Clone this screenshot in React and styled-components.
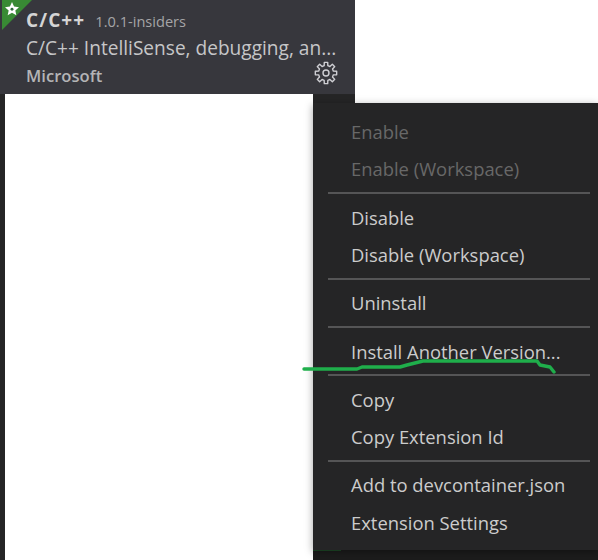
import React from "react"
import styled, { createGlobalStyle } from "styled-components"

const GlobalStyle = createGlobalStyle`
  html, body {
    margin: 0;
    padding: 0;
    background: #fff;
  }
`
const Page = styled.div`
  position: relative;
  width: 598px;
  height: 560px;
  overflow: hidden;
  background: #fff;
  font-family: "Open Sans", "Noto Sans", sans-serif;
  display: flex;
  flex-direction: column;
`
const ExtensionRow = styled.div`
  position: relative;
  box-sizing: border-box;
  width: 355px;
  height: 94px;
  padding: 7px 0 0 26px;
  background: #37373d;
  flex: 0 0 auto;
`
const Badge = styled.div`
  position: absolute;
  top: 0;
  left: 2px;
  width: 0;
  height: 0;
  border-top: 30px solid #388a34;
  border-right: 30px solid transparent;
`
const BadgeStar = styled.svg`
  position: absolute;
  top: 1px;
  left: 4px;
  width: 16px;
  height: 16px;
`
const TitleLine = styled.div`
  display: flex;
  align-items: baseline;
  height: 26px;
  line-height: 26px;
`
const Name = styled.span`
  font-size: 19px;
  font-weight: 700;
  letter-spacing: 1.1px;
  color: #d4d4d4;
  margin-right: 10px;
`
const Version = styled.span`
  font-size: 14.6px;
  color: #a5a5a7;
`
const Description = styled.div`
  font-size: 19.1px;
  line-height: 30px;
  color: #c6c6c8;
  white-space: nowrap;
`
const FooterLine = styled.div`
  display: flex;
  align-items: center;
  justify-content: space-between;
  padding-right: 17px;
  height: 25px;
`
const Publisher = styled.span`
  font-size: 16.6px;
  font-weight: 600;
  color: #b4b4b6;
`
const GearIcon = styled.svg`
  width: 24px;
  height: 24px;
  margin-bottom: 5px;
  fill: none;
  stroke: #cfcfd4;
  stroke-width: 1.4;
  stroke-linejoin: round;
`
const Body = styled.div`
  flex: 1;
  display: flex;
`
const LeftEdge = styled.div`
  width: 5px;
  background: #252526;
`
const Blank = styled.div`
  width: 308px;
  background: #fff;
`
const BehindMenu = styled.div`
  width: 42px;
  height: 10px;
  background: #252526;
`
const Footer = styled.div`
  position: absolute;
  left: 313px;
  right: 0;
  bottom: 0;
  height: 10px;
  background: #1c1c1c;

  &::before {
    content: "";
    position: absolute;
    top: 0;
    left: 0;
    width: 28px;
    height: 1px;
    background: #1f4a27;
  }
`
const Menu = styled.div`
  position: absolute;
  top: 103px;
  left: 313px;
  right: 0;
  height: 447px;
  box-sizing: border-box;
  padding: 10px 0 8px;
  background: #252526;
  box-shadow: 0 2px 8px rgba(0, 0, 0, 0.36);
`
const Item = styled.div`
  height: 37.2px;
  line-height: 37.2px;
  padding-left: 38px;
  font-size: 18.4px;
  white-space: nowrap;
  color: ${props => (props.$disabled ? "#686868" : "#cccccc")};
`
const Separator = styled.div`
  height: 2px;
  margin: 4.6px 8px 4.6px 15px;
  background: #555556;
`
const Scribble = styled.svg`
  position: absolute;
  top: 355px;
  left: 300px;
  width: 260px;
  height: 25px;
  fill: none;
  stroke: #1fae4b;
  stroke-width: 3.4;
  stroke-linecap: round;
  stroke-linejoin: round;
`

const groups = [
  [
    { label: "Enable", disabled: true },
    { label: "Enable (Workspace)", disabled: true },
  ],
  [{ label: "Disable" }, { label: "Disable (Workspace)" }],
  [{ label: "Uninstall" }],
  [{ label: "Install Another Version..." }],
  [{ label: "Copy" }, { label: "Copy Extension Id" }],
  [{ label: "Add to devcontainer.json" }, { label: "Extension Settings" }],
]

// eight toothed cog outline, tooth pointing straight up
const gearPath = () => {
  const point = (deg, r) => {
    const a = ((deg - 90) * Math.PI) / 180
    return `${(12 + r * Math.cos(a)).toFixed(2)} ${(12 + r * Math.sin(a)).toFixed(2)}`
  }
  const parts = []
  for (let i = 0; i < 8; i++) {
    const a = i * 45
    parts.push(point(a - 14, 7.6), point(a - 9, 10.8), point(a + 9, 10.8), point(a + 14, 7.6))
  }
  return `M${parts.join("L")}Z`
}

const App = () => {
  return (
    <Page>
      <GlobalStyle />
      <ExtensionRow>
        <Badge />
        <BadgeStar viewBox="0 0 24 24">
          <path
            d="M12 1.5l3.1 6.9 7.4.8-5.5 5 1.5 7.3L12 17.8l-6.5 3.7L7 14.2l-5.5-5 7.4-.8z"
            fill="#fff"
          />
          <circle cx="12" cy="12.5" r="2.2" fill="#2f6b3a" />
        </BadgeStar>
        <TitleLine>
          <Name>C/C++</Name>
          <Version>1.0.1-insiders</Version>
        </TitleLine>
        <Description>C/C++ IntelliSense, debugging, an...</Description>
        <FooterLine>
          <Publisher>Microsoft</Publisher>
          <GearIcon viewBox="0 0 24 24">
            <path d={gearPath()} />
            <circle cx="12" cy="12" r="3" />
          </GearIcon>
        </FooterLine>
      </ExtensionRow>
      <Body>
        <LeftEdge />
        <Blank />
        <BehindMenu />
      </Body>
      <Footer />
      <Menu>
        {groups.map((group, index) => (
          <React.Fragment key={index}>
            {index > 0 && <Separator />}
            {group.map(item => (
              <Item key={item.label} $disabled={item.disabled}>
                {item.label}
              </Item>
            ))}
          </React.Fragment>
        ))}
      </Menu>
      <Scribble viewBox="0 0 260 25">
        <path d="M4 14 L57 14 L62 12 L100 12 L107 10 L123 6 L237 6 L240 10 L250 12 L254 17" />
      </Scribble>
    </Page>
  )
}

export default App
